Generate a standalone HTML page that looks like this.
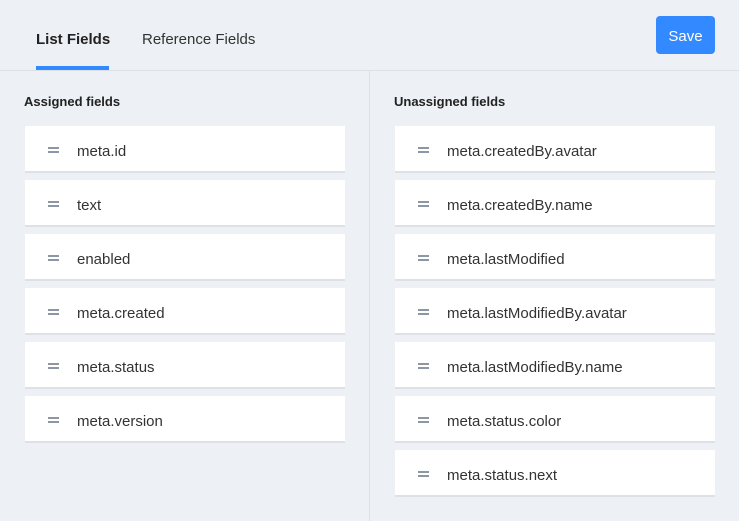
<!DOCTYPE html>
<html><head><style>
*,*:before{margin:0;padding:0;box-sizing:border-box}
body{width:739px;height:521px;background:#edf0f4;font-family:"Liberation Sans",sans-serif;position:relative;overflow:hidden;color:#222}
.hdr{position:absolute;left:0;top:0;width:739px;height:71px;border-bottom:1px solid #dde1e6}
.tab{position:absolute;top:31px;font-size:15px}
.t1{left:36px;font-weight:bold;color:#222}
.t2{left:142px;color:#333}
.ul{position:absolute;left:36px;top:66px;width:73px;height:4px;background:#3389ff}
.save{position:absolute;left:656px;top:16px;width:59px;height:38px;background:#3389ff;border-radius:4px;color:#fff;font-size:15px;text-align:center;line-height:42px}
.vd{position:absolute;left:369px;top:71px;width:1px;height:450px;background:#dde1e6}
.h{position:absolute;top:94px;font-size:13px;font-weight:bold;color:#222}
.card{position:absolute;width:320px;height:47px;background:#fff;border-bottom:2px solid #dde1e6;font-size:15px;color:#333;line-height:51px;padding-left:52px}
.card:before{content:"";position:absolute;left:23px;top:21px;width:11px;height:6px;border-top:2px solid #8d96a3;border-bottom:2px solid #8d96a3}
</style></head><body>
<div class="hdr"></div>
<div class="tab t1">List Fields</div>
<div class="tab t2">Reference Fields</div>
<div class="ul"></div>
<div class="save">Save</div>
<div class="vd"></div>
<div class="h" style="left:24px">Assigned fields</div>
<div class="h" style="left:394px">Unassigned fields</div>
<div class="card" style="left:25px;top:126px">meta.id</div>
<div class="card" style="left:25px;top:180px">text</div>
<div class="card" style="left:25px;top:234px">enabled</div>
<div class="card" style="left:25px;top:288px">meta.created</div>
<div class="card" style="left:25px;top:342px">meta.status</div>
<div class="card" style="left:25px;top:396px">meta.version</div>
<div class="card" style="left:395px;top:126px">meta.createdBy.avatar</div>
<div class="card" style="left:395px;top:180px">meta.createdBy.name</div>
<div class="card" style="left:395px;top:234px">meta.lastModified</div>
<div class="card" style="left:395px;top:288px">meta.lastModifiedBy.avatar</div>
<div class="card" style="left:395px;top:342px">meta.lastModifiedBy.name</div>
<div class="card" style="left:395px;top:396px">meta.status.color</div>
<div class="card" style="left:395px;top:450px">meta.status.next</div>
</body></html>
